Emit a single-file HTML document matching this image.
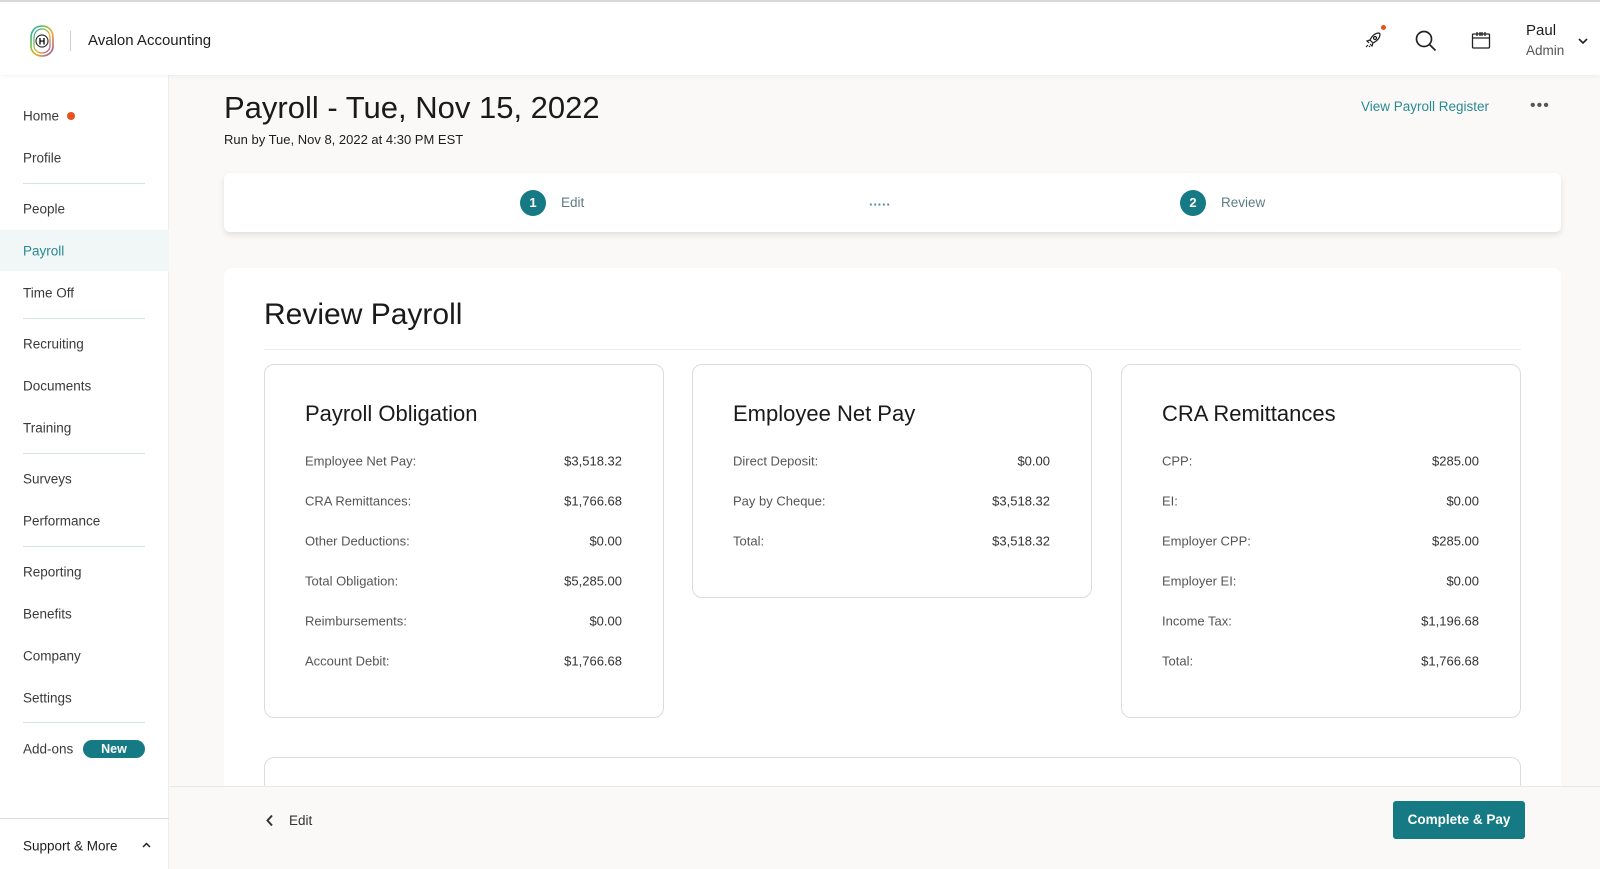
<!DOCTYPE html>
<html><head><meta charset="utf-8"><style>
*{box-sizing:border-box;margin:0;padding:0}
body{width:1600px;height:869px;overflow:hidden;background:#faf9f7;font-family:"Liberation Sans",sans-serif;position:relative;color:#1d1d1f}
.a{position:absolute;white-space:nowrap}
#top{position:absolute;left:0;top:0;width:1600px;height:75px;background:#fff;border-top:2px solid #d8d8d8;box-shadow:0 1px 4px rgba(0,0,0,.06);z-index:3}
#side{position:absolute;left:0;top:75px;width:169px;height:794px;background:#fff;border-right:1px solid #eee}
.nav{position:absolute;left:23px;font-size:13.5px;color:#3a3a3a;transform:translateY(-50%)}
.div{position:absolute;left:23px;width:122px;height:1px;background:#d5e3e6}
.card{position:absolute;background:#fff;border-radius:6px}
.sub{position:absolute;top:364px;width:400px;border:1px solid #dcdcdc;border-radius:10px;background:#fff}
.sub h3{position:absolute;left:40px;top:36px;font-size:22px;font-weight:normal;color:#1a1a1a}
.row{position:absolute;left:40px;right:41px;font-size:13px;color:#555;display:flex;justify-content:space-between;transform:translateY(-50%)}
.row span:last-child{color:#333}
</style></head><body>
<div id="top">
 <svg class="a" style="left:29px;top:22px" width="26" height="34" viewBox="0 0 26 34"><defs><linearGradient id="g" x1="0" y1="0" x2="1" y2="1"><stop offset="0" stop-color="#1aa6b7"/><stop offset=".35" stop-color="#7bc043"/><stop offset=".6" stop-color="#f6a623"/><stop offset="1" stop-color="#8e44ad"/></linearGradient></defs><path d="M13 2C6 2 2 7 2 14v8c0 6 5 10 11 10s11-4 11-10v-8C24 7 20 2 13 2z" fill="none" stroke="url(#g)" stroke-width="1.6"/><path d="M13 5C8 5 5 9 5 14v8c0 4 4 7 8 7s8-3 8-7v-8c0-5-3-9-8-9z" fill="none" stroke="url(#g)" stroke-width="1.2"/><circle cx="13" cy="17" r="6" fill="#fff" stroke="#333" stroke-width="1.2"/><text x="13" y="20.5" font-size="9" font-weight="bold" text-anchor="middle" font-family="Liberation Sans">H</text></svg>
 <div class="a" style="left:70px;top:29px;width:1px;height:20px;background:#ccc"></div>
 <div class="a" style="left:88px;top:30px;font-size:15px;color:#1d1d1f">Avalon Accounting</div>
 <svg class="a" style="left:1363px;top:26px" width="22" height="22" viewBox="0 0 22 22" fill="none" stroke="#222" stroke-width="1.2"><path d="M16 5c-4 0-7 3-9 7l3 3c4-2 7-5 7-9z"/><circle cx="12" cy="10" r="1.5"/><path d="M7 12l-3 1 2 2M10 15l-1 3-2-2M5 17l-2 2M7 18l-1 1"/></svg>
 <div class="a" style="left:1381px;top:23px;width:5px;height:5px;border-radius:50%;background:#e8501f"></div>
 <svg class="a" style="left:1414px;top:27px" width="24" height="24" viewBox="0 0 24 24" fill="none" stroke="#222" stroke-width="1.7"><circle cx="10" cy="10" r="7.5"/><path d="M15.5 15.5l6 6"/></svg>
 <svg class="a" style="left:1471px;top:28px" width="20" height="20" viewBox="0 0 20 20" fill="none" stroke="#222" stroke-width="1.3"><rect x="1.5" y="4" width="17" height="14" rx="1"/><path d="M1.5 8h17M6 2v4M14 2v4M9 2v4M11 2v4"/></svg>
 <div class="a" style="left:1526px;top:20px;font-size:15px;color:#1d1d1f">Paul</div>
 <div class="a" style="left:1526px;top:41px;font-size:13.5px;color:#555">Admin</div>
 <svg class="a" style="left:1578px;top:35px" width="10" height="8" viewBox="0 0 10 8" fill="none" stroke="#222" stroke-width="1.6"><path d="M1 2l4 4 4-4"/></svg>
</div>
<div id="side">
 <div class="nav" style="top:41px">Home</div>
 <div class="a" style="left:67px;top:37px;width:8px;height:8px;border-radius:50%;background:#e8501f"></div>
 <div class="nav" style="top:83px">Profile</div>
 <div class="div" style="top:108px"></div>
 <div class="nav" style="top:134px">People</div>
 <div class="a" style="left:0;top:155px;width:169px;height:41px;background:#f1f6f6"></div>
 <div class="nav" style="top:176px;color:#2a8a94">Payroll</div>
 <div class="nav" style="top:218px">Time Off</div>
 <div class="div" style="top:243px"></div>
 <div class="nav" style="top:269px">Recruiting</div>
 <div class="nav" style="top:311px">Documents</div>
 <div class="nav" style="top:353px">Training</div>
 <div class="div" style="top:378px"></div>
 <div class="nav" style="top:404px">Surveys</div>
 <div class="nav" style="top:446px">Performance</div>
 <div class="div" style="top:471px"></div>
 <div class="nav" style="top:497px">Reporting</div>
 <div class="nav" style="top:539px">Benefits</div>
 <div class="nav" style="top:581px">Company</div>
 <div class="nav" style="top:623px">Settings</div>
 <div class="div" style="top:647px"></div>
 <div class="nav" style="top:674px">Add-ons</div>
 <div class="a" style="left:83px;top:665px;width:62px;height:18px;border-radius:9px;background:#157a84;color:#fff;font-size:12.5px;font-weight:bold;text-align:center;line-height:18px">New</div>
 <div class="a" style="left:0;top:743px;width:169px;height:1px;background:#ddd"></div>
 <div class="nav" style="top:771px;color:#1d1d1f">Support &amp; More</div>
 <svg class="a" style="left:142px;top:767px" width="9" height="7" viewBox="0 0 9 7" fill="none" stroke="#222" stroke-width="1.5"><path d="M1 5l3.5-3.5L8 5"/></svg>
</div>
<div class="a" style="left:224px;top:90px;font-size:31px;color:#1a1a1a">Payroll - Tue, Nov 15, 2022</div>
<div class="a" style="left:224px;top:132px;font-size:13px;color:#1d1d1f">Run by Tue, Nov 8, 2022 at 4:30 PM EST</div>
<div class="a" style="left:1361px;top:99px;font-size:13.5px;color:#2a8a94">View Payroll Register</div>
<div class="a" style="left:1530px;top:97px;font-size:16px;color:#555;letter-spacing:1px">•••</div>
<div class="card" style="left:224px;top:173px;width:1337px;height:59px;box-shadow:0 3px 6px rgba(0,0,0,.1)">
 <div class="a" style="left:296px;top:17px;width:26px;height:26px;border-radius:50%;background:#157a84;color:#fff;font-size:13px;font-weight:bold;text-align:center;line-height:26px">1</div>
 <div class="a" style="left:337px;top:22px;font-size:13.5px;color:#5e7b84">Edit</div>
 <div class="a" style="left:645px;top:24px;font-size:13px;font-weight:bold;color:#4a8a94">·····</div>
 <div class="a" style="left:956px;top:17px;width:26px;height:26px;border-radius:50%;background:#157a84;color:#fff;font-size:13px;font-weight:bold;text-align:center;line-height:26px">2</div>
 <div class="a" style="left:997px;top:22px;font-size:13.5px;color:#5e7b84">Review</div>
</div>
<div class="card" style="left:224px;top:268px;width:1337px;height:560px;border-radius:8px">
 <div class="a" style="left:40px;top:30px;font-size:30px;color:#1a1a1a">Review Payroll</div>
 <div class="a" style="left:40px;top:81px;width:1257px;height:1px;background:#eee"></div>
</div>
<div class="sub" style="left:264px;height:354px"><h3>Payroll Obligation</h3>
 <div class="row" style="top:96px"><span>Employee Net Pay:</span><span>$3,518.32</span></div>
 <div class="row" style="top:136px"><span>CRA Remittances:</span><span>$1,766.68</span></div>
 <div class="row" style="top:176px"><span>Other Deductions:</span><span>$0.00</span></div>
 <div class="row" style="top:216px"><span>Total Obligation:</span><span>$5,285.00</span></div>
 <div class="row" style="top:256px"><span>Reimbursements:</span><span>$0.00</span></div>
 <div class="row" style="top:296px"><span>Account Debit:</span><span>$1,766.68</span></div>
</div>
<div class="sub" style="left:692px;height:234px"><h3>Employee Net Pay</h3>
 <div class="row" style="top:96px"><span>Direct Deposit:</span><span>$0.00</span></div>
 <div class="row" style="top:136px"><span>Pay by Cheque:</span><span>$3,518.32</span></div>
 <div class="row" style="top:176px"><span>Total:</span><span>$3,518.32</span></div>
</div>
<div class="sub" style="left:1121px;height:354px"><h3>CRA Remittances</h3>
 <div class="row" style="top:96px"><span>CPP:</span><span>$285.00</span></div>
 <div class="row" style="top:136px"><span>EI:</span><span>$0.00</span></div>
 <div class="row" style="top:176px"><span>Employer CPP:</span><span>$285.00</span></div>
 <div class="row" style="top:216px"><span>Employer EI:</span><span>$0.00</span></div>
 <div class="row" style="top:256px"><span>Income Tax:</span><span>$1,196.68</span></div>
 <div class="row" style="top:296px"><span>Total:</span><span>$1,766.68</span></div>
</div>
<div class="sub" style="left:264px;top:757px;width:1257px;height:80px"></div>
<div class="a" style="left:169px;top:786px;width:1431px;height:83px;background:#faf9f7;border-top:1px solid #e8e8e8"></div>
<svg class="a" style="left:265px;top:814px" width="10" height="13" viewBox="0 0 10 13" fill="none" stroke="#333" stroke-width="2"><path d="M7 1.5L2.5 6.5 7 11.5"/></svg>
<div class="a" style="left:289px;top:813px;font-size:13.5px;color:#333">Edit</div>
<div class="a" style="left:1393px;top:801px;width:132px;height:38px;border-radius:3px;background:#157a84;color:#fff;font-size:13.5px;font-weight:bold;text-align:center;line-height:38px">Complete &amp; Pay</div>
</body></html>
